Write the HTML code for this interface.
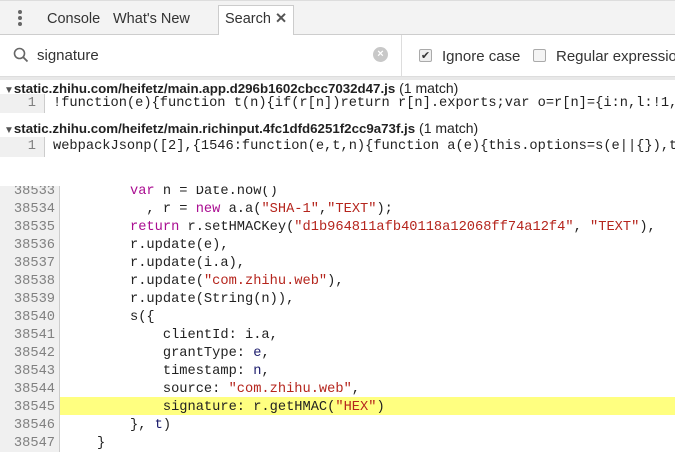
<!DOCTYPE html>
<html><head><style>
*{margin:0;padding:0;box-sizing:border-box}
body{width:675px;height:452px;overflow:hidden;background:#fff;font-family:"Liberation Sans",Arial,sans-serif;position:relative}
.tabs{position:absolute;left:0;top:0;width:675px;height:35px;background:#f3f3f3;border-bottom:1px solid #cdcdcd;border-top:1px solid #ddd}
.tabs span{position:absolute;top:10px;font-size:14.5px;color:#333}
.search{position:absolute;left:0;top:35px;width:675px;height:42px;background:#fff;border-bottom:1px solid #ddd}
.mono{font-family:"Liberation Mono",Consolas,monospace;font-size:13.7px}
.gut{position:absolute;left:0;background:#f0f0f0;border-right:1px solid #ccc;color:#808080;text-align:right}
.row{position:absolute;left:0;width:675px;height:18px;line-height:18px;white-space:pre}
.k{color:#aa0d91}.s{color:#b5251d}.v{color:#1c1c6c}
.n{position:absolute;left:0;width:55px;text-align:right;color:#808080}
.c{position:absolute;left:130px}
</style></head><body>
<div class="tabs">
  <div style="position:absolute;left:18px;top:9px;width:4px;height:4px;border-radius:2px;background:#666;box-shadow:0 6px 0 #666,0 12px 0 #666"></div>
  <span style="left:47px">Console</span>
  <span style="left:113px">What's New</span>
  <div style="position:absolute;left:218px;top:4px;width:76px;height:32px;background:#fff;border:1px solid #ccc;border-bottom:none"></div>
  <span style="left:225px">Search</span>
  <span style="left:275px;font-weight:bold;color:#555">✕</span>
</div>
<div class="search">
  <svg style="position:absolute;left:13px;top:12px" width="16" height="16" viewBox="0 0 16 16"><circle cx="6.5" cy="6.5" r="5" fill="none" stroke="#666" stroke-width="1.6"/><line x1="10" y1="10" x2="14.5" y2="14.5" stroke="#666" stroke-width="1.8"/></svg>
  <span style="position:absolute;left:37px;top:12px;font-size:15px;color:#333">signature</span>
  <div style="position:absolute;left:373px;top:12px;width:15px;height:15px;border-radius:8px;background:#c8c8c8;color:#fff;font-size:11px;line-height:15px;text-align:center;font-weight:bold">×</div>
  <div style="position:absolute;left:401px;top:0;width:1px;height:42px;background:#ddd"></div>
  <div style="position:absolute;left:419px;top:14px;width:13px;height:13px;border:1px solid #aaa;border-radius:2px;background:#eee;font-size:11px;line-height:12px;text-align:center;color:#333">✔</div>
  <span style="position:absolute;left:442px;top:13px;font-size:15px;color:#333">Ignore case</span>
  <div style="position:absolute;left:533px;top:14px;width:13px;height:13px;border:1px solid #aaa;border-radius:2px;background:#f4f4f4"></div>
  <span style="position:absolute;left:556px;top:13px;font-size:15px;color:#333;white-space:nowrap">Regular expression</span>
</div>
<div style="position:absolute;left:0;top:77px;width:675px;height:3px;background:#e8e8e8"></div>
<div style="position:absolute;left:0;top:80px;width:675px;height:96px;overflow:hidden;white-space:nowrap">
  <div style="position:absolute;left:4px;top:0px;font-size:14px;color:#222"><span style="font-size:10px;color:#555">▼</span><b style="font-size:13.3px">static.zhihu.com/heifetz/main.app.d296b1602cbcc7032d47.js</b> (1 match)</div>
  <div class="gut mono" style="top:14px;width:45px;height:19px;padding-right:8px;line-height:19px">1</div>
  <div class="mono" style="position:absolute;left:53px;top:14px;line-height:19px;color:#222">!function(e){function t(n){if(r[n])return r[n].exports;var o=r[n]={i:n,l:!1,</div>
  <div style="position:absolute;left:4px;top:40px;font-size:14px;color:#222"><span style="font-size:10px;color:#555">▼</span><b style="font-size:13.3px">static.zhihu.com/heifetz/main.richinput.4fc1dfd6251f2cc9a73f.js</b> (1 match)</div>
  <div class="gut mono" style="top:57px;width:45px;height:20px;padding-right:8px;line-height:20px">1</div>
  <div class="mono" style="position:absolute;left:53px;top:57px;line-height:20px;color:#222">webpackJsonp([2],{1546:function(e,t,n){function a(e){this.options=s(e||{}),t</div>
</div>
<div class="mono" style="position:absolute;left:0;top:186px;width:675px;height:266px;overflow:hidden;color:#222">
  <div class="gut" style="top:0;width:60px;height:266px"></div>
  <div class="row" style="top:211px;background:#ffff80;left:60px;width:615px;"></div>
  <div class="row" style="top:-3px"><span class="n">38533</span><span class="c"><span class="k">var</span> n = Date.now()</span></div>
<div class="row" style="top:15px"><span class="n">38534</span><span class="c">  , r = <span class="k">new</span> a.a(<span class="s">"SHA-1"</span>,<span class="s">"TEXT"</span>);</span></div>
<div class="row" style="top:33px"><span class="n">38535</span><span class="c"><span class="k">return</span> r.setHMACKey(<span class="s">"d1b964811afb40118a12068ff74a12f4"</span>, <span class="s">"TEXT"</span>),</span></div>
<div class="row" style="top:51px"><span class="n">38536</span><span class="c">r.update(e),</span></div>
<div class="row" style="top:69px"><span class="n">38537</span><span class="c">r.update(i.a),</span></div>
<div class="row" style="top:87px"><span class="n">38538</span><span class="c">r.update(<span class="s">"com.zhihu.web"</span>),</span></div>
<div class="row" style="top:105px"><span class="n">38539</span><span class="c">r.update(String(n)),</span></div>
<div class="row" style="top:123px"><span class="n">38540</span><span class="c">s({</span></div>
<div class="row" style="top:141px"><span class="n">38541</span><span class="c">    clientId: i.a,</span></div>
<div class="row" style="top:159px"><span class="n">38542</span><span class="c">    grantType: <span class="v">e</span>,</span></div>
<div class="row" style="top:177px"><span class="n">38543</span><span class="c">    timestamp: <span class="v">n</span>,</span></div>
<div class="row" style="top:195px"><span class="n">38544</span><span class="c">    source: <span class="s">"com.zhihu.web"</span>,</span></div>
<div class="row" style="top:213px"><span class="n">38545</span><span class="c">    signature: r.getHMAC(<span class="s">"HEX"</span>)</span></div>
<div class="row" style="top:231px"><span class="n">38546</span><span class="c">}, <span class="v">t</span>)</span></div>
<div class="row" style="top:249px"><span class="n">38547</span><span style="position:absolute;left:97px">}</span></div>
</div>
</body></html>
